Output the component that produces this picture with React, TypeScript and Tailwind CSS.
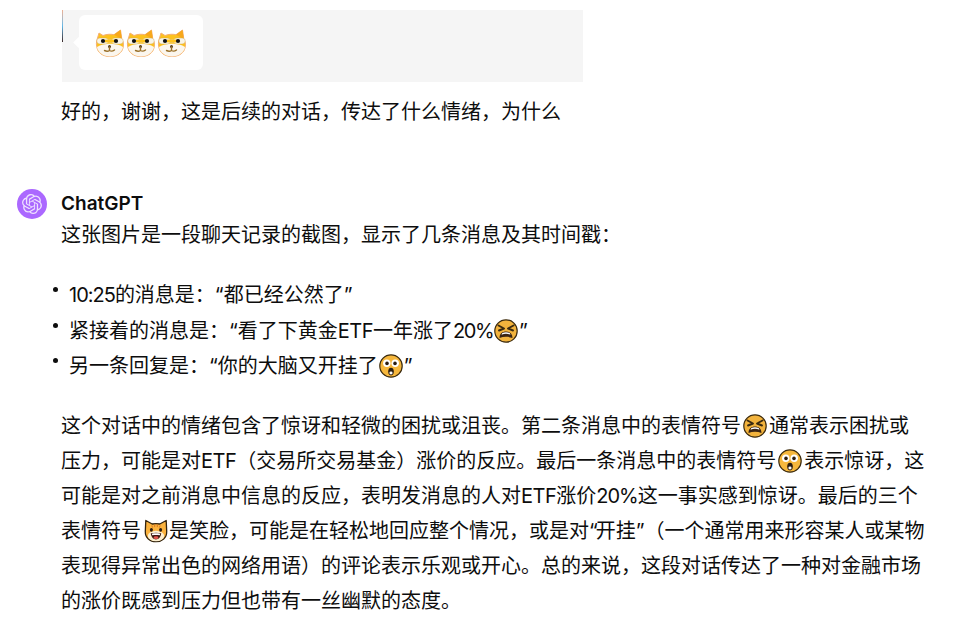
import React from "react";
import { SiOpenai } from "react-icons/si";

function Tired({ list }: { list?: boolean }) {
  return (
    <svg viewBox="0 0 24 24" className={list ? "inline-block w-6 h-6 ml-[1px] mr-[1px] align-[-5px]" : "inline-block w-6 h-6 mx-[2px] align-[-5px]"}>
      <circle cx="12" cy="12" r="11.2" fill="#f2b33d" stroke="#3a2a10" strokeWidth="1.2" />
      <path d="M4.5 6.5 10 9.5 5 11.5M19.5 6.5 14 9.5 19 11.5" fill="none" stroke="#3a2a10" strokeWidth="1.9" strokeLinecap="round" strokeLinejoin="round" />
      <path d="M5.5 19c0-4.5 3-6.5 6.5-6.5s6.5 2 6.5 6.5c-4-1.6-9-1.6-13 0z" fill="#3a2414" />
      <path d="M7.5 15.8c3-1.4 6-1.4 9 0l-.8-1.7c-2.4-1-5-1-7.4 0z" fill="#fff" />
    </svg>
  );
}

function Wow({ list }: { list?: boolean }) {
  return (
    <svg viewBox="0 0 24 24" className={list ? "inline-block w-6 h-6 ml-[1px] mr-[1px] align-[-5px]" : "inline-block w-6 h-6 mx-[2px] align-[-5px]"}>
      <circle cx="12" cy="12" r="11.2" fill="#f6b73c" stroke="#3a2a10" strokeWidth="1.2" />
      <circle cx="7.8" cy="9.2" r="3.7" fill="#fff" />
      <circle cx="16.2" cy="9.2" r="3.7" fill="#fff" />
      <circle cx="8" cy="9.4" r="1.8" fill="#2a1c10" />
      <circle cx="16" cy="9.4" r="1.8" fill="#2a1c10" />
      <ellipse cx="12" cy="17.6" rx="2.8" ry="3.8" fill="#2a1c10" />
      <ellipse cx="12" cy="19" rx="1.6" ry="1.4" fill="#fff" />
    </svg>
  );
}

function Cat() {
  return (
    <svg viewBox="0 0 24 24" className="inline-block w-6 h-6 ml-[3px] mr-[1px] align-[-5px]">
      <path d="M1.8 1.5 8.2 5c2.5-.5 5.1-.5 7.600 0l6.400-3.500.5 11c.2 6.300-4.700 10.200-10.700 10.200S1.100 18.800 1.300 12.500z" fill="#fbb33e" stroke="#33240e" strokeWidth="1.3" strokeLinejoin="round" />
      <path d="M10.700 5.300v2.800M13.300 5.300v2.800M7.800 6.500 8.600 8.600M16.200 6.500 15.400 8.600" stroke="#d9771f" strokeWidth="1" />
      <ellipse cx="12" cy="17" rx="8.2" ry="5.2" fill="#fdf0d0" />
      <ellipse cx="7.4" cy="10.8" rx="1.5" ry="1.9" fill="#2a1c10" />
      <ellipse cx="16.6" cy="10.8" rx="1.5" ry="1.9" fill="#2a1c10" />
      <path d="M6.800 14.300c3.400-.7 7-.7 10.400 0-.3 3.700-2.500 6.200-5.200 6.200s-4.900-2.500-5.200-6.200z" fill="#3f1a12" />
      <path d="M7.800 14.700c2.800-.5 5.600-.5 8.400 0l-.4 1.500c-2.500-.4-5.100-.4-7.600 0z" fill="#fff" />
      <ellipse cx="12" cy="18.7" rx="2.4" ry="1.4" fill="#e8584f" />
    </svg>
  );
}

function Doge() {
  return (
    <svg viewBox="0 0 32 32" className="w-8 h-8 -mx-[0.5px] blur-[0.4px]">
      <path d="M3.500 11 5 6l4 2.500c4-1.500 8-1.500 11-.8L26.500 3l1.300 9c2 3 2.200 7 .7 10.500-2 4.800-7 7-12.500 7s-10.500-2.200-12.500-7c-1.500-4-1.500-7.500 0-11.500z" fill="#fdc21e" stroke="#f4ae74" strokeWidth="1" strokeLinejoin="round" />
      <path d="M20 7.700 26.500 3l1.300 9z" fill="#f7a81b" />
      <path d="M3 20c4-2.200 7-3.200 13-3.200s9.500 1 13 3.200c-.8 5.500-6.500 9.500-13 9.500S3.800 25.500 3 20z" fill="#fbf6ee" />
      <path d="M2.800 14c0-1.800 1.400-3 3.200-3h5c1.800 0 2.500 1 3 1.600h4c.5-.6 1.200-1.600 3-1.600h5c1.800 0 3.200 1.200 3.200 3s-1.400 3-3.200 3h-5c-1.800 0-2.500-1-3-1.600h-4c-.5.6-1.200 1.600-3 1.600H6c-1.800 0-3.200-1.200-3.200-3z" fill="#f8f4e8" stroke="#c9a24a" strokeWidth="0.4" />
      <rect x="11" y="12.600" width="10" height="2.800" fill="#fdc21e" />
      <circle cx="9" cy="14" r="2.1" fill="#111" />
      <circle cx="22" cy="14" r="2.1" fill="#111" />
      <circle cx="15.500" cy="19.500" r="1.5" fill="#4d3a20" />
      <path d="M15.500 20v3.500M10.500 23.500c2 1 3.500 1 5 0 1.500 1 3 1 5-.5" fill="none" stroke="#9a7028" strokeWidth="1.4" strokeLinecap="round" />
    </svg>
  );
}

export default function App() {
  return (
    <div className="w-[976px] h-[622px] overflow-hidden bg-white text-[20px] leading-[35px] text-[#0d0d0d] [text-spacing-trim:space-all] [font-family:Inter,'Noto_Sans_CJK_SC',sans-serif]">
      <div className="pt-[10px] pl-[61px]">
        <div className="relative ml-[1px] w-[521px] h-[72px] bg-[#f5f5f5] pt-[5px] pl-[17px]">
          <div className="absolute left-0 top-0 w-[1px] h-[32px] bg-gradient-to-b from-[#f0b090] via-[#60b8e8] to-[#3a2a2a]" />
          <div className="relative w-[124px] h-[55px] bg-white rounded-[6px] flex items-center justify-center">
            <div className="absolute -left-[4px] top-[23px] w-[9px] h-[9px] rotate-45 bg-white" />
            <div className="flex pt-[1px]">
              <Doge />
              <Doge />
              <Doge />
            </div>
          </div>
        </div>
        <p className="mt-[13px]">好的，谢谢，这是后续的对话，传达了什么情绪，为什么</p>
      </div>

      <div className="flex mt-[57px] pl-[17px]">
        <div className="w-[30px] h-[30px] rounded-full bg-[#ab68ff] flex items-center justify-center shrink-0 mt-[2px]">
          <SiOpenai className="w-[20px] h-[20px] text-white opacity-80" />
        </div>
        <div className="ml-[14px] w-[880px]">
          <div className="text-[19px] leading-[28px] font-semibold mt-[3px]">ChatGPT</div>
          <p>这张图片是一段聊天记录的截图，显示了几条消息及其时间戳：</p>
          <ul className="mt-[25px] leading-[35.5px]">
            <li className="relative pl-[8px] whitespace-nowrap">
              <span className="absolute left-[-8px] top-[9px] w-[5px] h-[5px] rounded-full bg-[#0d0d0d]" />
              <span className="tracking-[-1px]">10:25</span>的消息是：“都已经公然了”
            </li>
            <li className="relative pl-[8px] whitespace-nowrap">
              <span className="absolute left-[-8px] top-[9px] w-[5px] h-[5px] rounded-full bg-[#0d0d0d]" />
              紧接着的消息是：“看了下黄金<span className="tracking-[-0.5px]">ETF</span>一年涨了<span className="tracking-[-1.5px]">20%</span><Tired list />”
            </li>
            <li className="relative pl-[8px] whitespace-nowrap">
              <span className="absolute left-[-8px] top-[9px] w-[5px] h-[5px] rounded-full bg-[#0d0d0d]" />
              另一条回复是：“你的大脑又开挂了<Wow list />”
            </li>
          </ul>
          <p className="mt-[24px] whitespace-nowrap">
            这个对话中的情绪包含了惊讶和轻微的困扰或沮丧。第二条消息中的表情符号<Tired />通常表示困扰或<br />
            压力，可能是对<span className="tracking-[-0.5px]">ETF</span>（交易所交易基金）涨价的反应。最后一条消息中的表情符号<Wow />表示惊讶，这<br />
            可能是对之前消息中信息的反应，表明发消息的人对<span className="tracking-[-0.5px]">ETF</span>涨价<span className="tracking-[-1px]">20%</span>这一事实感到惊讶。最后的三个<br />
            表情符号<Cat />是笑脸，可能是在轻松地回应整个情况，或是对<span className="tracking-[-2px]">“</span>开挂”（一个通常用来形容某人或某物<br />
            表现得异常出色的网络用语）的评论表示乐观或开心。总的来说，这段对话传达了一种对金融市场<br />
            的涨价既感到压力但也带有一丝幽默的态度。
          </p>
        </div>
      </div>
    </div>
  );
}
